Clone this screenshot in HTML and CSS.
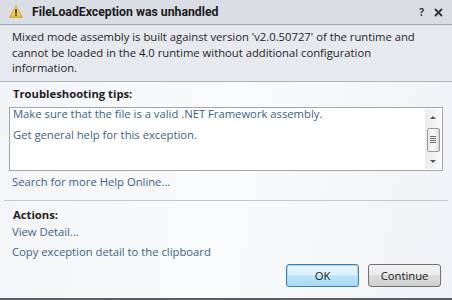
FILE: index.html
```html
<!DOCTYPE html>
<html>
<head>
<meta charset="utf-8">
<link rel="stylesheet" href="styles.css">
</head>
<body>
<div class="dialog">
  <div class="titlebar">
    <svg class="warn" width="14" height="13" viewBox="0 0 14 13">
      <defs>
        <linearGradient id="wg" x1="0" y1="0" x2="0" y2="1">
          <stop offset="0" stop-color="#fff3a0"/>
          <stop offset="1" stop-color="#f0c020"/>
        </linearGradient>
      </defs>
      <path d="M7 0.8 L13.4 12.3 L0.6 12.3 Z" fill="url(#wg)" stroke="#c89a10" stroke-width="0.8" stroke-linejoin="round"/>
      <rect x="6.2" y="4" width="1.6" height="4.6" fill="#2a2a2a"/>
      <rect x="6.2" y="9.4" width="1.6" height="1.6" fill="#2a2a2a"/>
    </svg>
    <span class="title">FileLoadException was unhandled</span>
    <span class="ctrl">
      <span class="help">?</span>
      <svg class="close" width="9" height="9" viewBox="0 0 9 9"><path d="M1 1 L8 8 M8 1 L1 8" stroke="#333" stroke-width="1.8"/></svg>
    </span>
  </div>
  <div class="message">Mixed mode assembly is built against version 'v2.0.50727' of the runtime and cannot be loaded in the 4.0 runtime without additional configuration information.</div>
  <div class="body">
    <div class="section tips">
      <div class="heading">Troubleshooting tips:</div>
      <div class="tipbox">
        <div class="tiplist">
          <a class="link">Make sure that the file is a valid .NET Framework assembly.</a>
          <a class="link">Get general help for this exception.</a>
        </div>
        <div class="scrollbar">
          <span class="arrow up"></span>
          <span class="thumb"><i></i><i></i><i></i><i></i></span>
          <span class="arrow down"></span>
        </div>
      </div>
      <a class="link search">Search for more Help Online...</a>
    </div>
    <div class="section actions">
      <div class="heading">Actions:</div>
      <a class="link">View Detail...</a>
      <a class="link">Copy exception detail to the clipboard</a>
    </div>
    <div class="buttons">
      <button class="btn ok">OK</button>
      <button class="btn">Continue</button>
    </div>
  </div>
  <div class="bottom"></div>
</div>
</body>
</html>
```
FILE: styles.css
```css
* { box-sizing: border-box; }
html, body { margin: 0; padding: 0; }
body {
  width: 452px;
  height: 300px;
  overflow: hidden;
  font-family: "Open Sans", "Noto Sans", sans-serif;
  font-size: 11.25px;
  color: #1e1e1e;
}
.dialog {
  width: 452px;
  height: 300px;
  display: flex;
  flex-direction: column;
  background: linear-gradient(100deg, #f2f4f7 0%, #fafbfc 50%, #f0f2f5 100%);
}
.titlebar {
  height: 25px;
  flex: none;
  display: flex;
  align-items: center;
  padding: 0 0 0 9px;
  background: #d9dde4;
  border-bottom: 1px solid #9fa4ab;
}
.warn { flex: none; margin-top: -1px; }
.title {
  margin-left: 9px;
  font-family: Roboto, "Open Sans", sans-serif;
  font-weight: bold;
  font-size: 12.25px;
  color: #1a1a1a;
  flex: 1;
}
.ctrl {
  display: flex;
  align-items: center;
  gap: 10px;
  margin-right: 9px;
}
.help {
  font-size: 10px;
  font-weight: bold;
  color: #333;
}
.message {
  flex: none;
  height: 57px;
  padding: 4px 20px 0 12px;
  background: #e6e9ee;
  border-bottom: 1px solid #b3b7bd;
  line-height: 15.5px;
}
.body {
  flex: 1;
  display: flex;
  flex-direction: column;
  padding: 0 4px;
}
.section { display: flex; flex-direction: column; }
.tips { padding: 4px 5px 8px 5px; border-bottom: 1px solid #c4c7cc; }
.heading {
  font-weight: bold;
  padding-left: 4px;
  line-height: 16px;
}
.link {
  color: #3b5f8e;
  text-decoration: none;
  line-height: 20px;
  padding-left: 3px;
}
.tipbox {
  margin-top: 5px;
  height: 64px;
  display: flex;
  background: #fff;
  border: 1px solid #a3a6aa;
}
.tiplist {
  flex: 1;
  display: flex;
  flex-direction: column;
  padding: 0 0 0 3px;
  margin-top: -5px;
}
.tiplist .link { padding-left: 0; line-height: 21px; }
.scrollbar {
  width: 16px;
  margin: 1px 1px 1px 0;
  background: linear-gradient(90deg, #ececec, #f8f8f8);
  display: flex;
  flex-direction: column;
  align-items: center;
  justify-content: space-between;
  padding: 7px 0 6px 0;
}
.arrow {
  width: 0; height: 0;
  border-left: 3px solid transparent;
  border-right: 3px solid transparent;
}
.arrow.up { border-bottom: 3px solid #555; }
.arrow.down { border-top: 3px solid #555; }
.thumb {
  width: 13px;
  height: 24px;
  border: 1px solid #9a9a9a;
  border-radius: 2px;
  background: linear-gradient(90deg, #e6e6e6, #fbfbfb 50%, #dcdcdc);
  display: flex;
  flex-direction: column;
  align-items: center;
  justify-content: center;
  gap: 1px;
}
.thumb i { display: block; width: 6px; height: 1px; background: #6b6b6b; }
.search { margin-top: 1px; padding-left: 3px; }
.actions { padding: 6px 5px 0 5px; }
.actions .heading { margin-bottom: -1px; }
.buttons {
  margin-top: auto;
  display: flex;
  justify-content: flex-end;
  gap: 9px;
  padding: 0 7px 11px 0;
}
.btn {
  width: 73px;
  height: 23px;
  font-family: inherit;
  font-size: 11.25px;
  color: #1a1a1a;
  border: 1px solid #707070;
  border-radius: 3px;
  background: linear-gradient(180deg, #f2f2f2 0%, #ebebeb 49%, #dddddd 50%, #cfcfcf 100%);
  padding: 0;
}
.btn.ok {
  border-color: #3c7fb1;
  box-shadow: inset 0 0 0 1px #a8daf3;
  background: linear-gradient(180deg, #eaf6fd 0%, #d9f0fc 49%, #bee6fd 50%, #a7d9f5 100%);
}
.bottom {
  flex: none;
  height: 2px;
  background: #5a5e63;
}
```
